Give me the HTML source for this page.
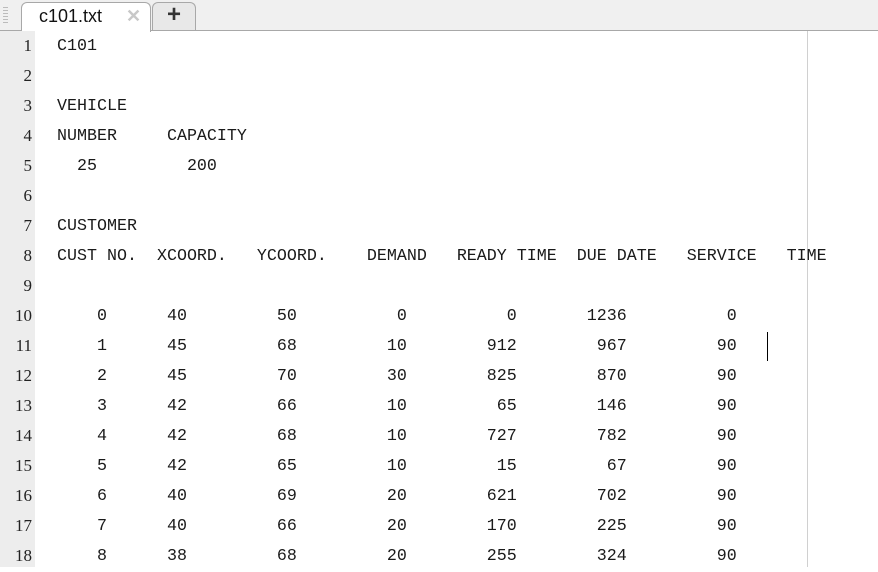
<!DOCTYPE html>
<html><head><meta charset="utf-8"><style>
*{margin:0;padding:0;box-sizing:border-box}
html,body{width:878px;height:567px;overflow:hidden;background:#fff}
.bar{position:absolute;left:0;top:0;width:878px;height:31px;background:#f0f0f0;border-bottom:1px solid #a8a8a8}
.grip{position:absolute;left:3px;top:7px;width:5px;height:16px;background:repeating-linear-gradient(#bbb 0 1px,transparent 1px 3px)}
.tab{position:absolute;left:21px;top:2px;width:130px;height:30px;background:#fff;border:1px solid #a8a8a8;border-bottom:none;border-radius:6px 6px 0 0}
.tab span{position:absolute;left:17px;top:3px;font:18px "Liberation Sans",sans-serif;color:#111}
.tab i{position:absolute;left:104px;top:3px;font:bold 18px "Liberation Sans",sans-serif;color:#c8c8c8;font-style:normal}
.plus{position:absolute;left:152px;top:2px;width:44px;height:28px;background:#e8e8e8;border:1px solid #a8a8a8;border-bottom:none;border-radius:6px 6px 0 0;font:bold 24px "Liberation Sans",sans-serif;text-align:center;line-height:24px;color:#333}
.gut{position:absolute;left:0;top:31px;width:35px;height:536px;background:#ededed}
.nums{position:absolute;left:0;top:31px;width:32px;text-align:right;font:17px/30px "Liberation Serif",serif;color:#222}
pre{position:absolute;left:57px;top:32px;font:16.67px/30px "Liberation Mono",monospace;color:#1a1a1a}
.edge{position:absolute;left:807px;top:31px;width:1px;height:536px;background:#d0d0d0}
.cur{position:absolute;left:767px;top:332px;width:1px;height:29px;background:#000}
</style></head><body>
<div class="bar"><div class="grip"></div><div class="tab"><span>c101.txt</span><i>✕</i></div><div class="plus">+</div></div>
<div class="gut"></div>
<div class="nums">1<br>2<br>3<br>4<br>5<br>6<br>7<br>8<br>9<br>10<br>11<br>12<br>13<br>14<br>15<br>16<br>17<br>18</div>
<div class="edge"></div>
<pre>C101

VEHICLE
NUMBER     CAPACITY
  25         200

CUSTOMER
CUST NO.  XCOORD.   YCOORD.    DEMAND   READY TIME  DUE DATE   SERVICE   TIME

    0      40         50          0          0       1236          0
    1      45         68         10        912        967         90
    2      45         70         30        825        870         90
    3      42         66         10         65        146         90
    4      42         68         10        727        782         90
    5      42         65         10         15         67         90
    6      40         69         20        621        702         90
    7      40         66         20        170        225         90
    8      38         68         20        255        324         90</pre>
<div class="cur"></div>
</body></html>
